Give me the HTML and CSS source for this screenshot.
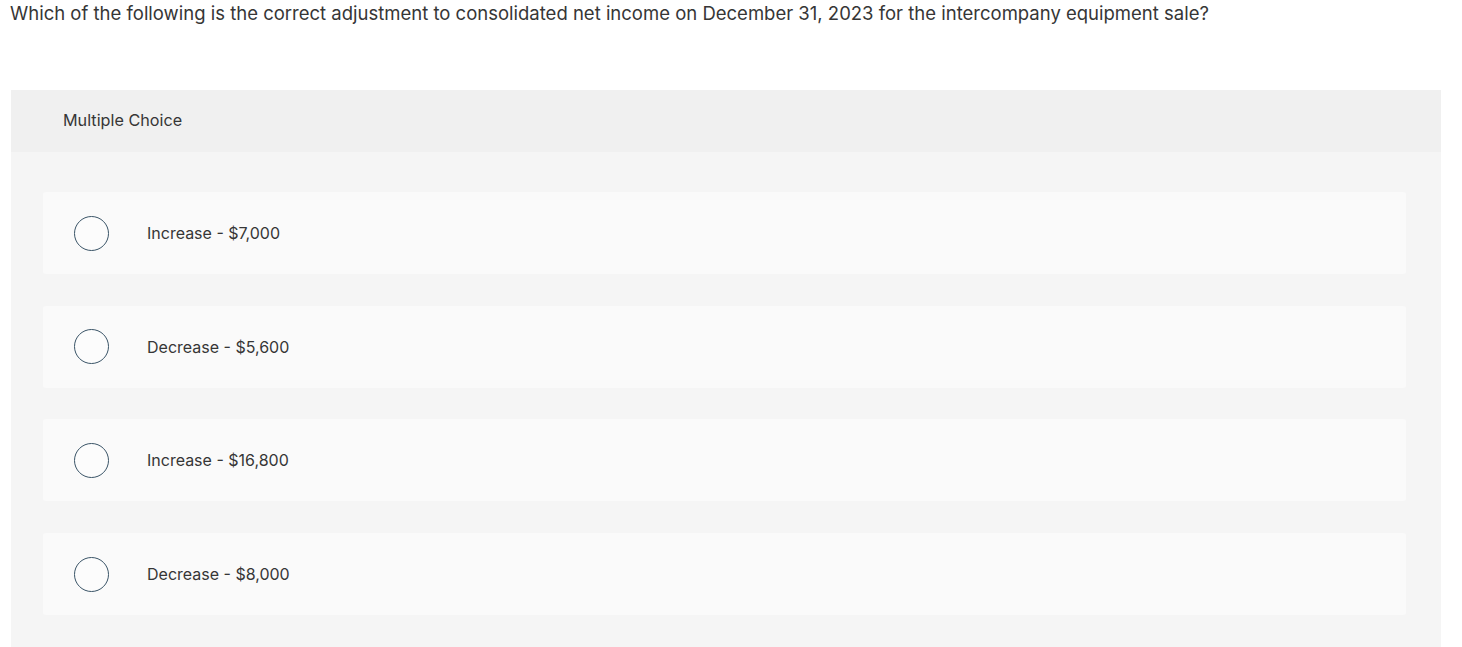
FILE: index.html
```html
<!DOCTYPE html>
<html>
<head>
<meta charset="utf-8">
<link rel="stylesheet" href="styles.css">
</head>
<body>
<div class="page">
  <p class="question">Which of the following is the correct adjustment to consolidated net income on December 31, 2023 for the intercompany equipment sale?</p>
  <div class="panel">
    <div class="panel-head">Multiple Choice</div>
    <div class="panel-body">
      <div class="option"><span class="radio"></span><span class="label">Increase - $7,000</span></div>
      <div class="option"><span class="radio"></span><span class="label">Decrease - $5,600</span></div>
      <div class="option"><span class="radio"></span><span class="label">Increase - $16,800</span></div>
      <div class="option"><span class="radio"></span><span class="label">Decrease - $8,000</span></div>
    </div>
  </div>
</div>
</body>
</html>
```
FILE: styles.css
```css
html, body {
  margin: 0;
  padding: 0;
  background: #ffffff;
}
body {
  font-family: "Inter", "Open Sans", "Liberation Sans", sans-serif;
  color: #333333;
}
.page {
  padding: 0 21px 0 11px;
}
.question {
  margin: 0 0 0 -1px;
  padding-top: 1px;
  font-size: 18.5px;
  line-height: 24px;
  font-weight: 400;
  color: #363636;
  white-space: nowrap;
}
.panel {
  margin-top: 65px;
  background: #f5f5f5;
}
.panel-head {
  background: #f0f0f0;
  height: 62px;
  display: flex;
  align-items: center;
  padding-left: 52px;
  padding-bottom: 2px;
  box-sizing: border-box;
  font-size: 16.2px;
  color: #363636;
}
.panel-body {
  padding: 40px 35px 40px 32px;
  display: flex;
  flex-direction: column;
  gap: 31.7px;
}
.option {
  height: 82px;
  background: #fafafa;
  border-radius: 3px;
  display: flex;
  align-items: center;
  padding-left: 31px;
}
.radio {
  width: 33px;
  height: 33px;
  border: 1.5px solid #3a5467;
  border-radius: 50%;
  background: #fcfcfc;
  flex: none;
}
.label {
  margin-left: 38px;
  font-size: 16px;
  color: #363636;
}
```
